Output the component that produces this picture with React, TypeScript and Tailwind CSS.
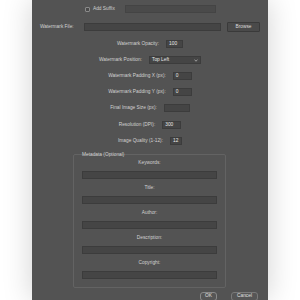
import React from "react";

const font = { fontFamily: '"Liberation Sans", Arial, sans-serif' };

function Field({ w, value }: { w: string; value?: string }) {
  return (
    <div className={`${w} h-[8px] bg-[#454545] border border-[#3c3c3c] flex items-center pl-[2px] text-[#e8e8e8]`}>
      {value}
    </div>
  );
}

function FormRow({ label, children, mt }: { label: string; children: React.ReactNode; mt: string }) {
  return (
    <div className={`${mt} h-[8px] flex items-center justify-center gap-[7px]`}>
      <span className="text-[#d2d2d2] whitespace-nowrap">{label}</span>
      {children}
    </div>
  );
}

function MetaField({ label, first }: { label: string; first?: boolean }) {
  return (
    <div className={first ? "mt-[2px]" : "mt-[6px]"}>
      <div className="h-[6px] flex items-center justify-center text-[#d2d2d2]">{label}</div>
      <div className="mt-[5px] h-[8px] bg-[#454545] border border-[#3c3c3c]" />
    </div>
  );
}

export default function App() {
  return (
    <div className="w-[300px] h-[300px] bg-white overflow-hidden" style={font}>
      <div className="ml-[32px] w-[236px] h-[300px] bg-[#535353] shadow-[0_0_28px_rgba(0,0,0,0.18)] text-[4.8px] leading-none flex flex-col">
        {/* suffix row */}
        <div className="mt-[5px] h-[8px] flex items-center pl-[53px]">
          <div className="w-[5px] h-[5px] border border-[#8a8a8a] bg-[#4a4a4a] rounded-[1px]" />
          <span className="ml-[3px] text-[#d2d2d2]">Add Suffix</span>
          <div className="ml-[10px] w-[91px] h-[8px] bg-[#4a4a4a] border border-[#444]" />
        </div>

        {/* watermark file */}
        <div className="mt-[9px] h-[10px] flex items-center px-[8px]">
          <span className="text-[#d2d2d2] whitespace-nowrap">Watermark File:</span>
          <div className="ml-[10px] flex-1 h-[8px] bg-[#454545] border border-[#3c3c3c]" />
          <div className="ml-[6px] w-[33px] h-[10px] bg-[#4a4a4a] border border-[#3a3a3a] rounded-[1px] flex items-center justify-center text-[#dcdcdc]">
            Browse
          </div>
        </div>

        <FormRow label="Watermark Opacity:" mt="mt-[8px]">
          <Field w="w-[17px]" value="100" />
        </FormRow>
        <FormRow label="Watermark Position:" mt="mt-[8px]">
          <div className="w-[52px] h-[8px] bg-[#454545] border border-[#3c3c3c] flex items-center justify-between px-[2px] text-[#e8e8e8]">
            <span>Top Left</span>
            <svg width="4" height="3" viewBox="0 0 4 3">
              <path d="M0.5 0.8 L2 2.2 L3.5 0.8" stroke="#cfcfcf" strokeWidth="0.7" fill="none" />
            </svg>
          </div>
        </FormRow>
        <FormRow label="Watermark Padding X (px):" mt="mt-[8px]">
          <Field w="w-[19px]" value="0" />
        </FormRow>
        <FormRow label="Watermark Padding Y (px):" mt="mt-[8px]">
          <Field w="w-[19px]" value="0" />
        </FormRow>
        <FormRow label="Final Image Size (px):" mt="mt-[8px]">
          <Field w="w-[26px]" />
        </FormRow>
        <FormRow label="Resolution (DPI):" mt="mt-[9px]">
          <Field w="w-[19px]" value="300" />
        </FormRow>
        <FormRow label="Image Quality (1-12):" mt="mt-[8px]">
          <Field w="w-[12px]" value="12" />
        </FormRow>

        {/* metadata group */}
        <div className="mt-[9px] ml-[41px] w-[153px] border border-[#636363] rounded-[2px] px-[8px] pb-[8px]">
          <div className="-mt-[3px] h-[6px] flex items-center text-[#d2d2d2]">Metadata (Optional)</div>
          <MetaField label="Keywords:" first />
          <MetaField label="Title:" />
          <MetaField label="Author:" />
          <MetaField label="Description:" />
          <MetaField label="Copyright:" />
        </div>

        {/* buttons */}
        <div className="mt-[4px] flex justify-end gap-[14px] pr-[10px]">
          <div className="w-[17px] h-[9px] border border-[#8a8a8a] rounded-[3px] bg-[#565656] flex items-center justify-center text-[#e0e0e0]">
            OK
          </div>
          <div className="w-[27px] h-[9px] border border-[#7a7a7a] rounded-[3px] bg-[#565656] flex items-center justify-center text-[#e0e0e0]">
            Cancel
          </div>
        </div>
      </div>
    </div>
  );
}
